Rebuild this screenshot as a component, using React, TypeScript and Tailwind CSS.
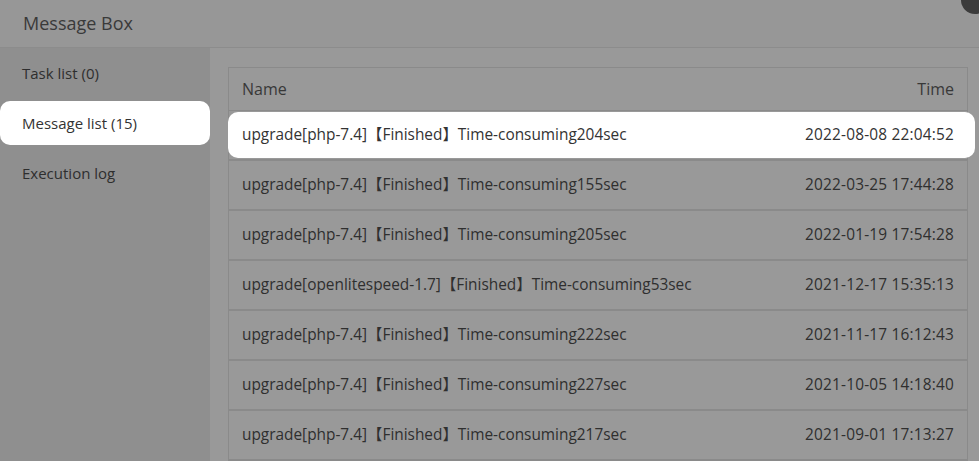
import React from "react";

export default function App() {
  const menu = [
    { label: "Task list (0)", active: false },
    { label: "Message list (15)", active: true },
    { label: "Execution log", active: false },
  ];

  const rows = [
    { name: "upgrade[php-7.4]【Finished】Time-consuming204sec", time: "2022-08-08 22:04:52" },
    { name: "upgrade[php-7.4]【Finished】Time-consuming155sec", time: "2022-03-25 17:44:28" },
    { name: "upgrade[php-7.4]【Finished】Time-consuming205sec", time: "2022-01-19 17:54:28" },
    { name: "upgrade[openlitespeed-1.7]【Finished】Time-consuming53sec", time: "2021-12-17 15:35:13" },
    { name: "upgrade[php-7.4]【Finished】Time-consuming222sec", time: "2021-11-17 16:12:43" },
    { name: "upgrade[php-7.4]【Finished】Time-consuming227sec", time: "2021-10-05 14:18:40" },
    { name: "upgrade[php-7.4]【Finished】Time-consuming217sec", time: "2021-09-01 17:13:27" },
  ];

  return (
    <div
      className="relative h-[461px] w-[979px] overflow-hidden bg-[#999999] text-[#333333]"
      style={{ fontFamily: '"Open Sans", "Noto Sans", "Noto Sans CJK SC", sans-serif' }}
    >
      {/* Header */}
      <div className="flex h-[48px] items-center border-b border-[#8c8c8c] bg-[#979797] px-[23px] text-[18px] text-[#3a3a3a]">
        Message Box
      </div>

      {/* Close button peeking in the corner */}
      <div className="absolute -right-[10px] -top-[14px] h-[28px] w-[28px] rounded-full bg-[#3b3b3b]" />

      <div className="flex h-[413px]">
        {/* Sidebar */}
        <div className="relative z-10 w-[210px] shrink-0 bg-[#8f8f8f]">
          {menu.map((item) => (
            <div key={item.label} className="flex h-[50px] items-center">
              {item.active ? (
                <div className="flex h-[44px] w-[212px] items-center rounded-[10px] bg-white px-[22px] text-[15px] text-[#333333]">
                  {item.label}
                </div>
              ) : (
                <div className="px-[22px] pt-px text-[15px] text-[#2e2e2e]">{item.label}</div>
              )}
            </div>
          ))}
        </div>

        {/* Content */}
        <div className="flex-1 pl-[18px] pr-[11px] pt-[19px]">
          <div className="border border-b-0 border-[#8a8a8a] text-[15.4px]">
            <div className="flex h-[43px] items-center justify-between border-b border-[#8a8a8a] px-[13px] text-[16px] text-[#383838]">
              <span>Name</span>
              <span>Time</span>
            </div>
            {rows.map((row, index) =>
              index === 0 ? (
                <div key={index} className="flex h-[50px] items-center border-b-[2px] border-[#8a8a8a]">
                  <div className="-ml-px -mr-[8px] flex h-[46px] flex-1 items-center justify-between rounded-[10px] bg-white pl-[14px] pr-[21px] text-[#333333]">
                    <span>{row.name}</span>
                    <span className="tracking-[0.2px]">{row.time}</span>
                  </div>
                </div>
              ) : (
                <div
                  key={index}
                  className="flex h-[50px] items-center justify-between border-b-[2px] border-[#8a8a8a] px-[13px] text-[#2f2f2f]"
                >
                  <span>{row.name}</span>
                  <span className="tracking-[0.2px]">{row.time}</span>
                </div>
              )
            )}
          </div>
        </div>
      </div>
    </div>
  );
}
